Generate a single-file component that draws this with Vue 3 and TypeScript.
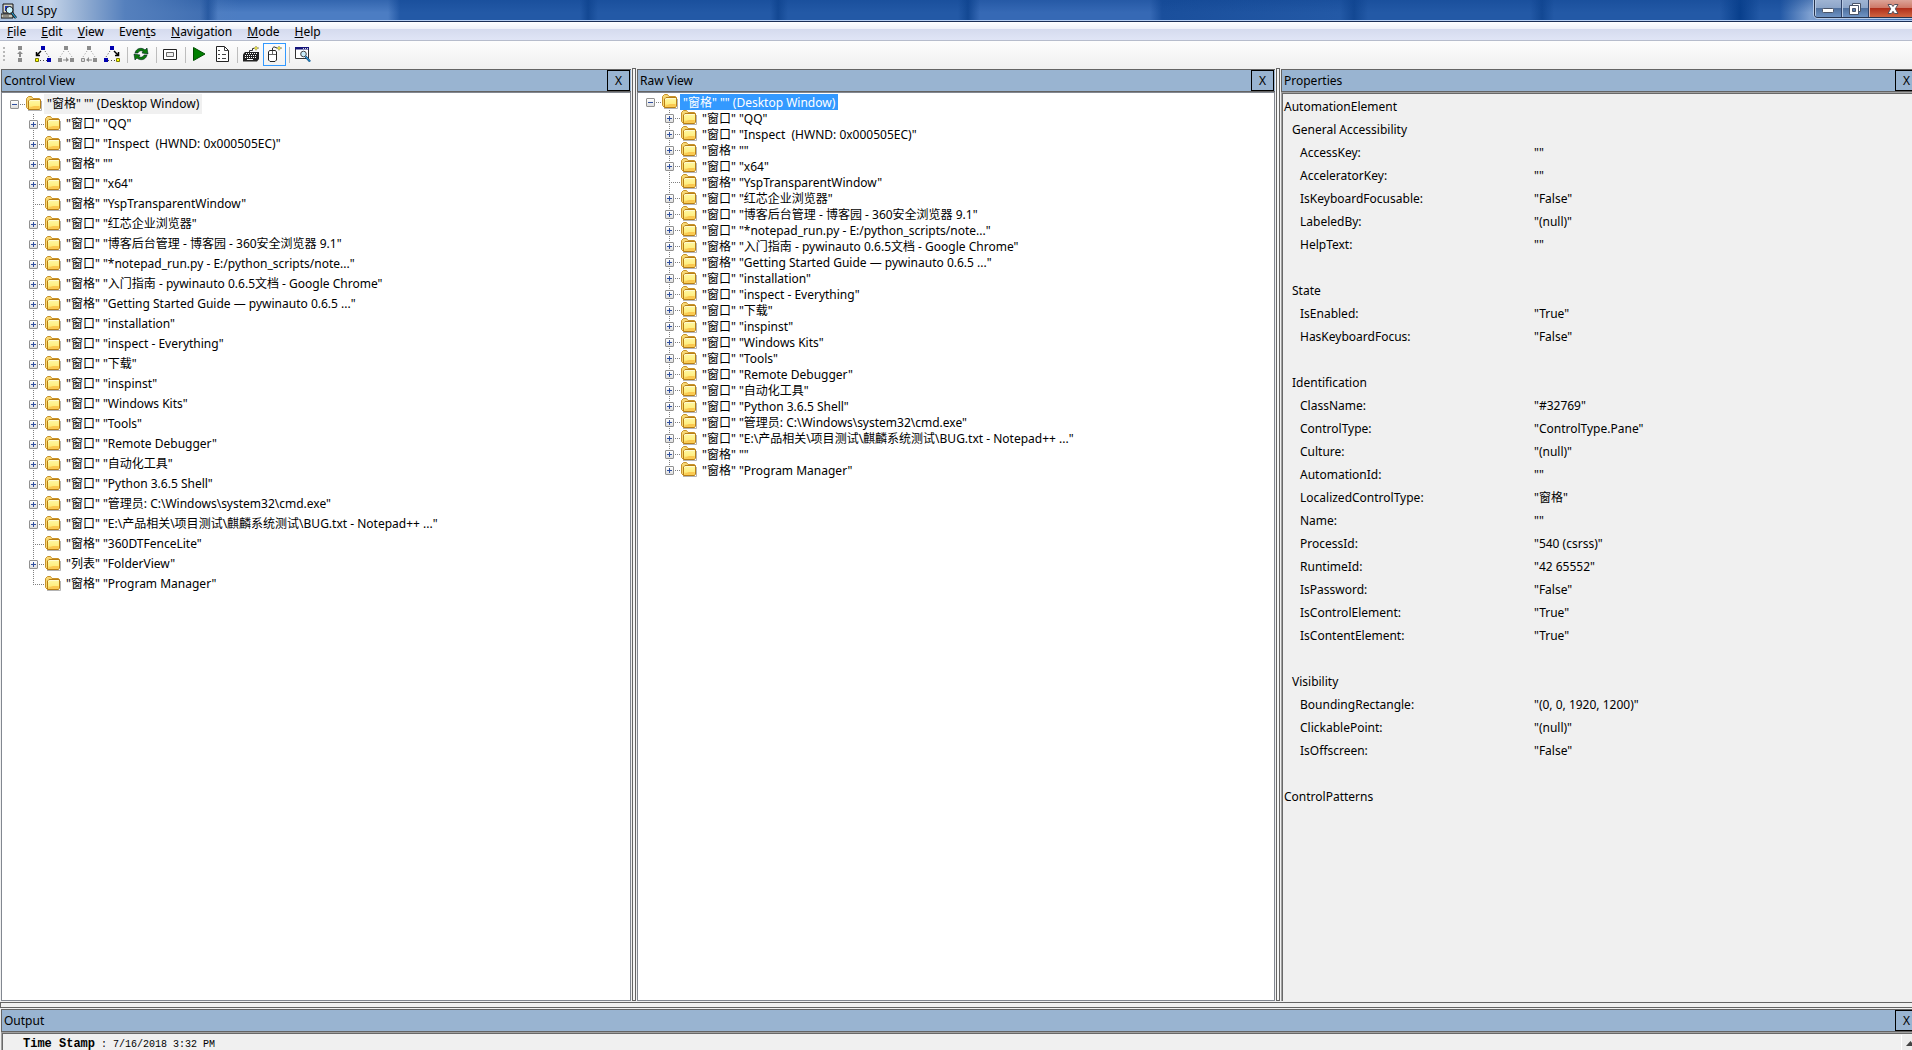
<script setup lang="ts">
interface TreeItem {
  kind: string
  name: string
  leaf?: boolean
}

interface PropertyRow {
  label: string
  level: number
  value?: string
}

const menus: [string, string, string][] = [
  ['', 'F', 'ile'],
  ['', 'E', 'dit'],
  ['', 'V', 'iew'],
  ['Even', 't', 's'],
  ['', 'N', 'avigation'],
  ['', 'M', 'ode'],
  ['', 'H', 'elp'],
]

const shared: TreeItem[] = [
  { kind: '窗口', name: 'QQ' },
  { kind: '窗口', name: 'Inspect  (HWND: 0x000505EC)' },
  { kind: '窗格', name: '' },
  { kind: '窗口', name: 'x64' },
  { kind: '窗格', name: 'YspTransparentWindow', leaf: true },
  { kind: '窗口', name: '红芯企业浏览器' },
  { kind: '窗口', name: '博客后台管理 - 博客园 - 360安全浏览器 9.1' },
  { kind: '窗口', name: '*notepad_run.py - E:/python_scripts/note...' },
  { kind: '窗格', name: '入门指南 - pywinauto 0.6.5文档 - Google Chrome' },
  { kind: '窗格', name: 'Getting Started Guide — pywinauto 0.6.5 ...' },
  { kind: '窗口', name: 'installation' },
  { kind: '窗口', name: 'inspect - Everything' },
  { kind: '窗口', name: '下载' },
  { kind: '窗口', name: 'inspinst' },
  { kind: '窗口', name: 'Windows Kits' },
  { kind: '窗口', name: 'Tools' },
  { kind: '窗口', name: 'Remote Debugger' },
  { kind: '窗口', name: '自动化工具' },
  { kind: '窗口', name: 'Python 3.6.5 Shell' },
  { kind: '窗口', name: '管理员: C:\\Windows\\system32\\cmd.exe' },
  { kind: '窗口', name: 'E:\\产品相关\\项目测试\\麒麟系统测试\\BUG.txt - Notepad++ ...' },
]

const views: { title: string; mode: string; items: TreeItem[] }[] = [
  {
    title: 'Control View',
    mode: 'control',
    items: [
      ...shared,
      { kind: '窗格', name: '360DTFenceLite', leaf: true },
      { kind: '列表', name: 'FolderView' },
      { kind: '窗格', name: 'Program Manager', leaf: true },
    ],
  },
  {
    title: 'Raw View',
    mode: 'raw',
    items: [...shared, { kind: '窗格', name: '' }, { kind: '窗格', name: 'Program Manager' }],
  },
]

const gap: PropertyRow = { label: '', level: 0 }

const properties: PropertyRow[] = [
  { label: 'AutomationElement', level: 0 },
  { label: 'General Accessibility', level: 1 },
  { label: 'AccessKey:', level: 2, value: '""' },
  { label: 'AcceleratorKey:', level: 2, value: '""' },
  { label: 'IsKeyboardFocusable:', level: 2, value: '"False"' },
  { label: 'LabeledBy:', level: 2, value: '"(null)"' },
  { label: 'HelpText:', level: 2, value: '""' },
  gap,
  { label: 'State', level: 1 },
  { label: 'IsEnabled:', level: 2, value: '"True"' },
  { label: 'HasKeyboardFocus:', level: 2, value: '"False"' },
  gap,
  { label: 'Identification', level: 1 },
  { label: 'ClassName:', level: 2, value: '"#32769"' },
  { label: 'ControlType:', level: 2, value: '"ControlType.Pane"' },
  { label: 'Culture:', level: 2, value: '"(null)"' },
  { label: 'AutomationId:', level: 2, value: '""' },
  { label: 'LocalizedControlType:', level: 2, value: '"窗格"' },
  { label: 'Name:', level: 2, value: '""' },
  { label: 'ProcessId:', level: 2, value: '"540 (csrss)"' },
  { label: 'RuntimeId:', level: 2, value: '"42 65552"' },
  { label: 'IsPassword:', level: 2, value: '"False"' },
  { label: 'IsControlElement:', level: 2, value: '"True"' },
  { label: 'IsContentElement:', level: 2, value: '"True"' },
  gap,
  { label: 'Visibility', level: 1 },
  { label: 'BoundingRectangle:', level: 2, value: '"(0, 0, 1920, 1200)"' },
  { label: 'ClickablePoint:', level: 2, value: '"(null)"' },
  { label: 'IsOffscreen:', level: 2, value: '"False"' },
  gap,
  { label: 'ControlPatterns', level: 0 },
]
</script>

<template>
  <div class="window">
    <svg class="defs" width="0" height="0" aria-hidden="true">
      <defs>
        <linearGradient id="folderFill" x1="0" y1="0" x2="0" y2="1">
          <stop offset="0" stop-color="#fff9a8" />
          <stop offset="0.6" stop-color="#ffef82" />
          <stop offset="1" stop-color="#f5c84c" />
        </linearGradient>
        <symbol id="folder" viewBox="0 0 16 16">
          <path d="M2 14.500H15.500V5" fill="none" stroke="#b4b4b4" />
          <path d="M.5 11.500V2.500L2.500 .5H5.500L7 2.500H13.500V5L5 13H2Z" fill="#f6d774" stroke="#c8922a" />
          <path d="M2.500 13.500V5L4 3.500H14.500V12L13.500 13.500Z" fill="url(#folderFill)" stroke="#b97f16" />
          <path d="M8 10H13.500V12.500H4V11.500Z" fill="#fbc850" />
          <path d="M3.500 6V5L4.500 4.500H13.500" fill="none" stroke="#fffbd0" />
        </symbol>
      </defs>
    </svg>

    <header class="titlebar">
      <svg class="app-icon" viewBox="0 0 16 16" aria-hidden="true">
        <path d="M2 1H12V10H2Z" fill="#d8d8cc" stroke="#111" />
        <path d="M4 3H10V8H4Z" fill="#1c35c8" />
        <path d="M0 11H12V15H0Z" fill="#c6c6b8" stroke="#111" />
        <path d="M2 13H8" stroke="#555" />
        <circle cx="8.500" cy="7" r="3.500" fill="#c9f3ff" stroke="#222" />
        <path d="M11 10L15 15" stroke="#111" stroke-width="2.600" />
        <path d="M11 10L15 15" stroke="#29a8df" stroke-width="1.200" />
      </svg>
      <h1>UI Spy</h1>
      <div class="caption-buttons">
        <button type="button" aria-label="Minimize">
          <svg width="14" height="14" viewBox="0 0 14 14"><rect x="1.500" y="6.500" width="11" height="4" rx="1" fill="#fff" stroke="#4a5468" /></svg>
        </button>
        <button type="button" aria-label="Restore">
          <svg width="14" height="14" viewBox="0 0 14 14">
            <path d="M4.500 1.500H12.500V9.500H4.500Z" fill="#fff" stroke="#4a5468" />
            <path d="M1.500 3.500H10.500V12.500H1.500Z" fill="#fff" stroke="#4a5468" />
            <path d="M4.500 6.500H7.500V9.500H4.500Z" fill="#5a7fb5" stroke="#4a5468" />
          </svg>
        </button>
        <button type="button" class="close" aria-label="Close">
          <svg width="14" height="14" viewBox="0 0 14 14">
            <path d="M2 2.500H5.500L7 4.500L8.500 2.500H12L9.300 6.800L12 11.500H8.500L7 9.300L5.500 11.500H2L4.700 6.800Z" fill="#fff" stroke="#54505c" />
          </svg>
        </button>
      </div>
    </header>

    <nav class="menubar">
      <button v-for="(menu, i) in menus" :key="i" type="button">{{ menu[0] }}<u>{{ menu[1] }}</u>{{ menu[2] }}</button>
    </nav>

    <div class="toolbar" role="toolbar">
      <span class="grip"></span>
      <button type="button" aria-label="Parent" disabled>
        <svg viewBox="0 0 16 16"><path d="M6 0H10V4H6ZM6 12H10V16H6ZM8 5L11 8H9V9H7V8H5Z" fill="#8c8c8c" /><path d="M7 9H9V11H7Z" fill="#8c8c8c" /></svg>
      </button>
      <button type="button" aria-label="First child">
        <svg viewBox="0 0 16 16">
          <path d="M6 0H10V4H6ZM12 12H16V16H12Z" fill="#0000b0" />
          <path d="M.5 12.500H3.500V15.500H.5Z" fill="#ff0" stroke="#777700" />
          <path d="M6 5L2 9M1.500 6V9.500H5" fill="none" stroke="#000" stroke-width="1.500" />
          <path d="M10 5L14 11M5 14.500H12" fill="none" stroke="#444" stroke-dasharray="1 2" />
        </svg>
      </button>
      <button type="button" aria-label="Next sibling" disabled>
        <svg viewBox="0 0 16 16">
          <path d="M6 0H10V4H6ZM0 12H4V16H0ZM12 12H16V16H12ZM5 13.500H8V11L11 14L8 16V14.500H5Z" fill="#8c8c8c" />
          <path d="M6 5L2 11M10 5L14 11" fill="none" stroke="#999" stroke-dasharray="1 2" />
        </svg>
      </button>
      <button type="button" aria-label="Previous sibling" disabled>
        <svg viewBox="0 0 16 16">
          <path d="M6 0H10V4H6ZM12 12H16V16H12ZM11 13.500H8V11L5 14L8 16V14.500H11Z" fill="#8c8c8c" />
          <path d="M.5 12.500H3.500V15.500H.5Z" fill="#ddd" stroke="#8c8c8c" />
          <path d="M6 5L2 11M10 5L14 11" fill="none" stroke="#999" stroke-dasharray="1 2" />
        </svg>
      </button>
      <button type="button" aria-label="Last child">
        <svg viewBox="0 0 16 16">
          <path d="M6 0H10V4H6ZM0 12H4V16H0Z" fill="#0000b0" />
          <path d="M12.500 12.500H15.500V15.500H12.500Z" fill="#ff0" stroke="#777700" />
          <path d="M10 5L14 9M14.500 6V9.500H11" fill="none" stroke="#000" stroke-width="1.500" />
          <path d="M6 5L2 11M4 14.500H12" fill="none" stroke="#444" stroke-dasharray="1 2" />
        </svg>
      </button>
      <span class="sep"></span>
      <button type="button" aria-label="Refresh">
        <svg viewBox="0 0 16 16">
          <path d="M2 7C3 2 9 1 12 4L14 2L15 8L9 7L10 5.500C8 4 6 5 5 7Z" fill="#0b7a0b" stroke="#022" stroke-width=".6" />
          <path d="M14 9C13 14 7 15 4 12L2 14L1 8L7 9L6 10.500C8 12 10 11 11 9Z" fill="#0b7a0b" stroke="#022" stroke-width=".6" />
        </svg>
      </button>
      <span class="sep"></span>
      <button type="button" aria-label="Highlight">
        <svg viewBox="0 0 16 16"><path d="M1.500 3.500H14.500V13.500H1.500Z" fill="#fff" stroke="#222" /><path d="M4.500 6.500H11.500V10.500H4.500Z" fill="#eee" stroke="#666" /></svg>
      </button>
      <span class="sep"></span>
      <button type="button" aria-label="Start">
        <svg viewBox="0 0 16 16"><path d="M2.500 1.500L14 8L2.500 14.500Z" fill="#008000" stroke="#004d00" /></svg>
      </button>
      <button type="button" aria-label="Configure events">
        <svg viewBox="0 0 16 16">
          <path d="M2.500 .5H10.500L14.500 4.500V15.500H2.500Z" fill="#fff" stroke="#222" />
          <path d="M10.500 .5V4.500H14.500M4 4.500H6M4 8.500H6M4 12.500H6M8 8.500H12M8 12.500H12" fill="none" stroke="#444" />
        </svg>
      </button>
      <span class="sep"></span>
      <button type="button" aria-label="Keyboard tracking">
        <svg viewBox="0 0 16 16">
          <path d="M2 6H16V13L14 15.500H0V8.500Z" fill="#222" />
          <path d="M3 7.500H14M2 9.500H13M2 11.500H13" stroke="#fff" stroke-dasharray="1 1" />
          <path d="M4 13.500H10" stroke="#fff" />
          <path d="M6.500 6V4.500H9.500V2.500H11" fill="none" stroke="#333" />
          <path d="M13 0L14 1.500L16 2L14 2.800L13 4.500L12 2.800L10.500 2L12 1.500Z" fill="#ece13c" stroke="#665" stroke-width=".4" />
        </svg>
      </button>
      <button type="button" class="active" aria-label="Mouse tracking" aria-pressed="true">
        <svg viewBox="0 0 16 16">
          <path d="M3.500 4.500H9.500L10.500 6V14L9 15.500H4L2.500 14V6Z" fill="#fff" stroke="#222" />
          <path d="M3 8.500H10M6.500 5V8" stroke="#666" />
          <path d="M6.500 4V2L8 .8L11 2" fill="none" stroke="#333" />
          <path d="M13 0L14 1.500L16 2L14 2.800L13 4.500L12 2.800L10.500 2L12 1.500Z" fill="#ece13c" stroke="#665" stroke-width=".4" />
        </svg>
      </button>
      <span class="sep"></span>
      <button type="button" aria-label="Find">
        <svg viewBox="0 0 16 16">
          <path d="M.5 1.500H13.500V12.500H.5Z" fill="#fff" stroke="#333" />
          <path d="M0 1H14V3.500H0Z" fill="#14147a" />
          <path d="M8 2.500H13" stroke="#ddd" stroke-dasharray="1 1" />
          <circle cx="8.500" cy="8" r="2.800" fill="#c8ecfa" stroke="#444" />
          <path d="M10.500 10.500L15 15.500" stroke="#124a80" stroke-width="2.200" />
          <path d="M10.500 10.500L15 15.500" stroke="#2fa9e0" />
        </svg>
      </button>
    </div>

    <main class="workspace">
      <template v-for="view in views" :key="view.mode">
        <section class="panel" :class="view.mode">
          <header class="panel-head">
            <h2>{{ view.title }}</h2>
            <button type="button">X</button>
          </header>
          <div class="tree">
            <div class="row root">
              <span class="toggle minus"></span>
              <span class="dots"></span>
              <svg class="folder"><use href="#folder" /></svg>
              <span class="label">"窗格" "" (Desktop Window)</span>
            </div>
            <ul>
              <li v-for="(item, i) in view.items" :key="i" class="row">
                <span class="toggle" :class="{ leaf: item.leaf }"></span>
                <span class="dots"></span>
                <svg class="folder"><use href="#folder" /></svg>
                <span class="label">"{{ item.kind }}" "{{ item.name }}"</span>
              </li>
            </ul>
          </div>
        </section>
        <div class="splitter"></div>
      </template>
      <section class="panel">
        <header class="panel-head">
          <h2>Properties</h2>
          <button type="button">X</button>
        </header>
        <div class="properties">
          <table>
            <tbody>
              <tr v-for="(row, i) in properties" :key="i">
                <th scope="row" :class="'level-' + row.level">{{ row.label }}</th>
                <td>{{ row.value }}</td>
              </tr>
            </tbody>
          </table>
        </div>
      </section>
    </main>

    <div class="hsplitter"></div>

    <section class="panel output">
      <header class="panel-head">
        <h2>Output</h2>
        <button type="button">X</button>
      </header>
      <div class="log">
        <p><b>Time Stamp</b> : 7/16/2018 3:32 PM</p>
        <div class="scrollbar">
          <button type="button" aria-label="Scroll up">
            <svg width="9" height="5" viewBox="0 0 9 5"><path d="M0 5L4.500 0L9 5Z" fill="#444" /></svg>
          </button>
        </div>
      </div>
    </section>
  </div>
</template>

<style>
body {
  margin: 0;
}
</style>

<style scoped>
* {
  box-sizing: border-box;
}

.window {
  display: flex;
  flex-direction: column;
  height: 100vh;
  overflow: hidden;
  background: #f0f0f0;
  color: #000;
  font: 12px/16px 'Noto Sans', 'Noto Sans CJK SC', sans-serif;
}

.defs {
  position: absolute;
}

button {
  margin: 0;
  padding: 0;
  border: 0;
  background: none;
  color: inherit;
  font: inherit;
}

h1,
h2,
p,
ul {
  margin: 0;
  padding: 0;
  font: inherit;
  list-style: none;
}

/* Title bar */
.titlebar {
  display: flex;
  flex: none;
  align-items: center;
  height: 22px;
  padding-left: 1px;
  border-bottom: 1px solid #1b2f55;
  box-shadow: inset 0 -1px #b4cdf0;
  background:
    linear-gradient(90deg, #a9c0dd 0, #c3d3e8 50px, #8fabd1 85px, #5580bd 125px, #5580bd00 240px),
    linear-gradient(#0d428f66, #0d428f00 60%),
    linear-gradient(90deg, #3868ae 0, #3868ae 200px, #174b97 208px, #4c7dc3 218px, #4c7dc3 388px, #2359a6 400px, #2359a6 580px, #134893 588px, #2359a6 598px, #2359a6 770px, #134893 778px, #2359a6 788px, #2359a6 958px, #134893 968px, #3669b5 980px, #3669b5 1150px, #1a4f9c 1162px, #2359a6 1340px, #134893 1354px, #2359a6 1368px, #2359a6 1530px, #134893 1542px, #2359a6 1554px, #2359a6 1720px, #083f8c 1740px, #2359a6 1760px, #2359a6 1780px, #7d9fd0 1810px, #3b6cb0 100%);
}

.app-icon {
  width: 16px;
  height: 16px;
}

.titlebar h1 {
  flex: 1;
  padding-left: 4px;
}

.caption-buttons {
  display: flex;
  align-self: flex-start;
  height: 18px;
  margin-right: -7px;
  border: 1px solid #26334d;
  border-top: 0;
  border-radius: 0 0 0 4px;
  box-shadow: 0 1px #b7cbe8, -1px 0 #b7cbe8;
  overflow: hidden;
}

.caption-buttons button {
  display: flex;
  align-items: center;
  justify-content: center;
  width: 27px;
  border-right: 1px solid #2f4268;
  background: linear-gradient(#9fb4d3, #8ba4c8 50%, #50719f 50%, #6e93c4);
  box-shadow: inset 1px 0 #b9cbe4;
}

.caption-buttons .close {
  width: 49px;
  background: linear-gradient(#dca498, #cd7563 50%, #b1301b 50%, #cf6440);
  box-shadow: inset 1px 0 #e6b9ae;
}

/* Menu bar */
.menubar {
  display: flex;
  flex: none;
  gap: 1px;
  height: 19px;
  border-bottom: 1px solid #b6bccc;
  background: linear-gradient(#fff, #eef1f8 7px, #d5dbee 7px, #e0e5f6);
}

.menubar button {
  padding: 2px 7px 0;
  line-height: 16px;
}

/* Toolbar */
.toolbar {
  display: flex;
  flex: none;
  align-items: center;
  height: 27px;
  background: linear-gradient(#fdfdfd, #f0f0f0);
}

.grip {
  width: 2px;
  height: 16px;
  margin: 0 4px 0 3px;
  background: repeating-linear-gradient(#b8b8b8 0 2px, transparent 2px 4px);
}

.toolbar button {
  display: flex;
  align-items: flex-start;
  width: 23px;
  height: 23px;
  padding: 3px;
}

.toolbar button.active {
  padding: 2px;
  border: 1px solid #3399ff;
}

.toolbar svg {
  flex: none;
  width: 16px;
  height: 16px;
}

.sep {
  width: 6px;
  height: 16px;
  background: linear-gradient(#bdbdbd, #bdbdbd) 3px 0 / 1px 100% no-repeat;
}

/* Panels */
.workspace {
  display: grid;
  flex: 1;
  grid-template-columns: 631fr 6px 638fr 6px 638fr;
  min-height: 0;
  margin: 0 -7px 1px 0;
}

.panel {
  display: flex;
  flex-direction: column;
  min-width: 0;
  padding-top: 1px;
}

.panel.control {
  padding-left: 1px;
}

.panel-head {
  display: flex;
  flex: none;
  align-items: center;
  height: 23px;
  border: solid #646464;
  border-width: 1px 0 1px 1px;
  background: #99b4d1;
}

.panel-head h2 {
  flex: 1;
  padding-left: 2px;
}

.panel-head button {
  width: 23px;
  height: 21px;
  margin-right: 1px;
  border: 1px solid #000;
}

.splitter {
  margin-right: 1px;
  margin-left: 1px;
  border: 1px solid #646464;
  background: #f5f5f5;
}

.hsplitter {
  flex: none;
  height: 6px;
  border: 1px solid #646464;
  border-right: 0;
}

/* Trees */
.tree {
  flex: 1;
  min-height: 0;
  padding: 1px 0 0 8px;
  overflow: hidden;
  border: 1px solid #828790;
  background: #fff;
}

.row {
  display: flex;
  align-items: center;
  height: 20px;
}

.raw .row {
  height: 16px;
}

.tree li {
  padding-left: 19px;
  background: repeating-linear-gradient(#808080 0 1px, transparent 1px 2px) 23px 0 / 1px 100% no-repeat;
}

.tree li:last-child {
  background-size: 1px 50%;
}

.toggle {
  width: 9px;
  height: 9px;
  border: 1px solid #919191;
  border-radius: 1px;
  background:
    linear-gradient(#2f4f9f, #2f4f9f) center / 5px 1px no-repeat,
    linear-gradient(#2f4f9f, #2f4f9f) center / 1px 5px no-repeat,
    linear-gradient(#fff, #dedede);
}

.toggle.minus {
  background:
    linear-gradient(#2f4f9f, #2f4f9f) center / 5px 1px no-repeat,
    linear-gradient(#fff, #dedede);
}

.toggle.leaf {
  border: 0;
  background: repeating-linear-gradient(90deg, #808080 0 1px, transparent 1px 2px) 4px 4px / 5px 1px no-repeat;
}

.dots {
  width: 7px;
  height: 1px;
  background: repeating-linear-gradient(90deg, transparent 0 1px, #808080 1px 2px);
}

.folder {
  width: 16px;
  height: 16px;
}

.label {
  margin-left: 2px;
  padding: 0 3px;
  line-height: 20px;
  white-space: pre;
}

.raw .label {
  padding-top: 2px;
  line-height: 14px;
}

.control .root .label {
  background: #f0f0f0;
}

.raw .root .label {
  background: #3399ff;
  color: #fff;
}

/* Properties */
.properties {
  flex: 1;
  min-height: 0;
  overflow: hidden;
  border-top: 1px solid #a0a0a0;
  border-left: 1px solid #a0a0a0;
  box-shadow: inset 1px 1px #696969;
}

table {
  width: 100%;
  margin-top: 2px;
  border-collapse: collapse;
  table-layout: fixed;
}

th,
td {
  height: 23px;
  padding: 0 0 0 2px;
  font-weight: normal;
  text-align: left;
}

th {
  width: 250px;
}

.level-1 {
  padding-left: 10px;
}

.level-2 {
  padding-left: 18px;
}

/* Output */
.output {
  flex: none;
  height: 42px;
  margin-right: -7px;
  padding-left: 1px;
  overflow: hidden;
}

.log {
  display: flex;
  flex: 1;
  align-items: flex-start;
  justify-content: space-between;
  border-top: 1px solid #a0a0a0;
  border-left: 1px solid #a0a0a0;
  box-shadow: inset 1px 1px #696969;
}

.log p {
  padding: 3px 0 0 21px;
  font: 10px/16px 'Liberation Mono', monospace;
}

.log b {
  font-size: 12px;
}

.scrollbar {
  align-self: stretch;
  width: 18px;
  margin-top: 2px;
  border-left: 1px solid #fff;
  background: #ededed;
}

.scrollbar button {
  display: flex;
  align-items: center;
  justify-content: center;
  width: 100%;
  height: 16px;
}
</style>
